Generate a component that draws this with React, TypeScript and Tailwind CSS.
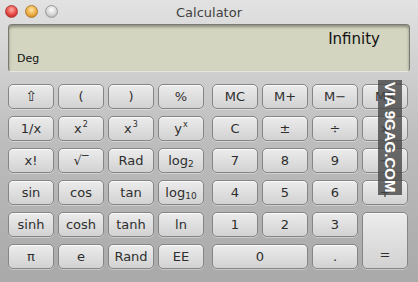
import React from "react";

const font = { fontFamily: '"DejaVu Sans", "Liberation Sans", sans-serif' };

function Btn({ children, className = "" }: { children: React.ReactNode; className?: string }) {
  return (
    <div
      className={
        "flex items-center justify-center rounded-[5px] border border-[#858585] bg-gradient-to-b from-[#ececec] to-[#d2d2d2] text-[13px] text-[#2e2e2e] shadow-[0_1px_0_rgba(255,255,255,0.35),inset_0_1px_0_rgba(255,255,255,0.8)] " +
        className
      }
    >
      {children}
    </div>
  );
}

export default function App() {
  const sup = "text-[8px] relative -top-[6px] ml-[1px]";
  const left: React.ReactNode[] = [
    <span className="text-[14px]">⇧</span>,
    "(",
    ")",
    "%",
    "1/x",
    <span>x<sup className={sup}>2</sup></span>,
    <span>x<sup className={sup}>3</sup></span>,
    <span>y<sup className={sup}>x</sup></span>,
    "x!",
    <span>√‾</span>,
    "Rad",
    <span>log<sub className="text-[9px]">2</sub></span>,
    "sin",
    "cos",
    "tan",
    <span>log<sub className="text-[9px]">10</sub></span>,
    "sinh",
    "cosh",
    "tanh",
    "ln",
    "π",
    "e",
    "Rand",
    "EE",
  ];
  return (
    <div
      className="relative w-[418px] h-[282px] overflow-hidden bg-gradient-to-b from-[#e2e2e2] via-[#bdbdbd] to-[#a9a9a9]"
      style={font}
    >
      {/* title bar */}
      <div className="relative flex h-[24px] items-center justify-center">
        <div className="absolute left-[5px] top-[5px] flex gap-[7px]">
          <div className="h-[13px] w-[13px] rounded-full border border-[#b04040] bg-[radial-gradient(circle_at_50%_35%,#ffb0a8,#e2413a_60%,#a82020)]" />
          <div className="h-[13px] w-[13px] rounded-full border border-[#b08030] bg-[radial-gradient(circle_at_50%_35%,#ffe6a8,#e9a73a_60%,#b07010)]" />
          <div className="h-[13px] w-[13px] rounded-full border border-[#9a9a9a] bg-[radial-gradient(circle_at_50%_35%,#ffffff,#d0d0d0_60%,#a0a0a0)]" />
        </div>
        <span className="text-[13px] text-[#404040] mt-[1px]">Calculator</span>
      </div>
      {/* display */}
      <div className="mx-[8px] w-[402px] h-[48px] rounded-[4px] border border-[#7a7a70] border-b-[#e8e8e0] bg-[#d3d5c0] shadow-[inset_0_2px_3px_rgba(0,0,0,0.35)] relative">
        <div className="absolute right-[29px] top-[3px] text-[15px] text-[#111]">Infinity</div>
        <div className="absolute left-[8px] bottom-[4px] text-[11px] text-[#111]">Deg</div>
      </div>
      {/* keypad */}
      <div className="mt-[12px] ml-[8px] flex gap-[8px]">
        <div className="grid grid-cols-[46px_46px_46px_46px] auto-rows-[25px] gap-x-[4px] gap-y-[7px]">
          {left.map((c, i) => (
            <Btn key={i}>{c}</Btn>
          ))}
        </div>
        <div className="grid grid-cols-[46px_46px_46px_46px] auto-rows-[25px] gap-x-[4px] gap-y-[7px]">
          <Btn>MC</Btn>
          <Btn>M+</Btn>
          <Btn>M−</Btn>
          <Btn>MR</Btn>
          <Btn>C</Btn>
          <Btn>±</Btn>
          <Btn>÷</Btn>
          <Btn>×</Btn>
          <Btn>7</Btn>
          <Btn>8</Btn>
          <Btn>9</Btn>
          <Btn>−</Btn>
          <Btn>4</Btn>
          <Btn>5</Btn>
          <Btn>6</Btn>
          <Btn>+</Btn>
          <Btn>1</Btn>
          <Btn>2</Btn>
          <Btn>3</Btn>
          <Btn className="row-span-2 items-end pb-[4px]">=</Btn>
          <Btn className="col-span-2">0</Btn>
          <Btn>.</Btn>
        </div>
      </div>
      {/* watermark */}
      <div className="absolute left-[378px] top-[80px] flex h-[115px] w-[24px] items-center justify-center bg-[rgba(70,70,70,0.8)]">
        <span
          className="whitespace-nowrap text-[15px] font-bold text-white rotate-90"
          style={{ fontFamily: '"Liberation Sans", sans-serif' }}
        >
          VIA 9GAG.COM
        </span>
      </div>
    </div>
  );
}
